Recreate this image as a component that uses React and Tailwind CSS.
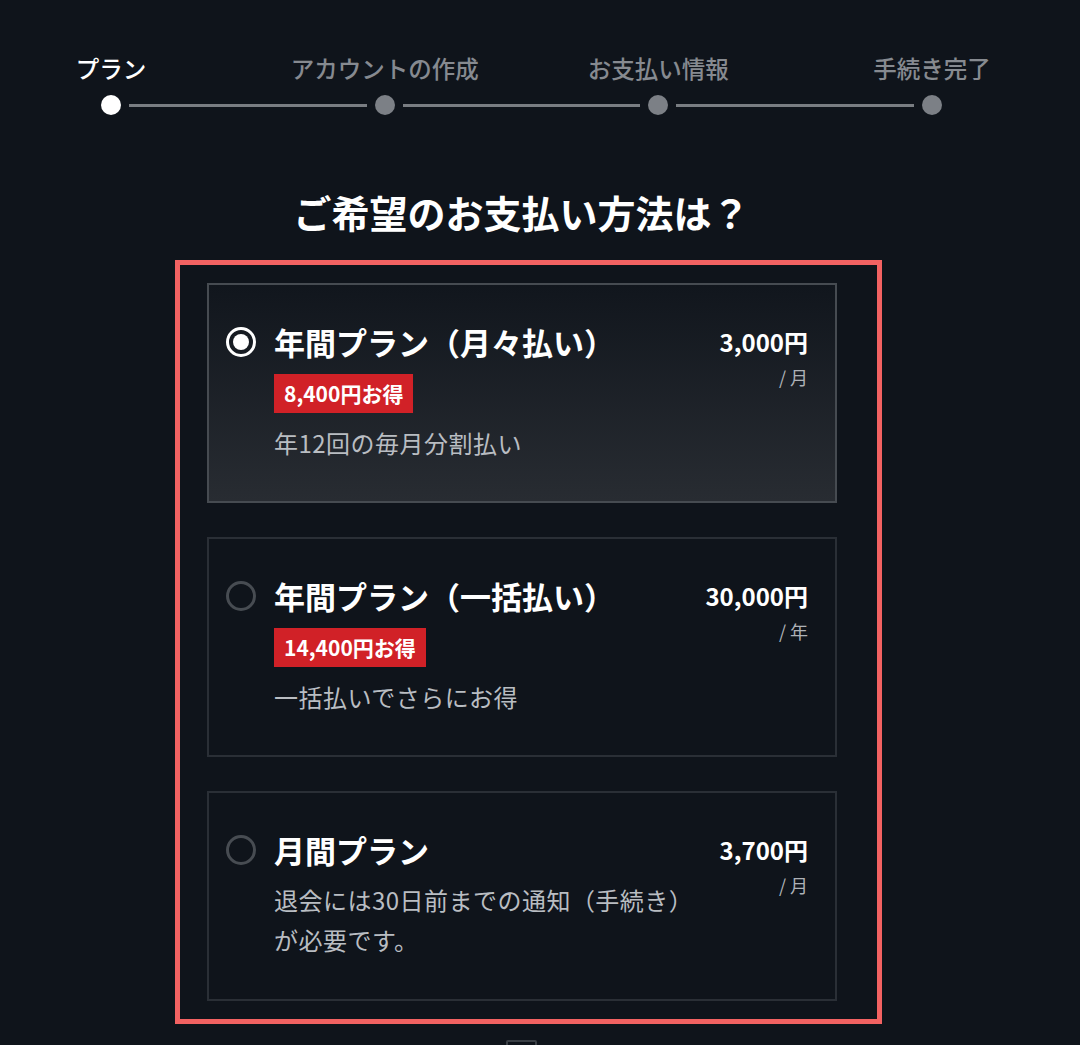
import React from 'react';

const steps = ['プラン', 'アカウントの作成', 'お支払い情報', '手続き完了'];

const plans = [
  {
    id: 'annual-monthly',
    title: '年間プラン（月々払い）',
    badge: '8,400円お得',
    desc: ['年12回の毎月分割払い'],
    price: '3,000円',
    unit: '/ 月',
    selected: true,
  },
  {
    id: 'annual-once',
    title: '年間プラン（一括払い）',
    badge: '14,400円お得',
    desc: ['一括払いでさらにお得'],
    price: '30,000円',
    unit: '/ 年',
    selected: false,
  },
  {
    id: 'monthly',
    title: '月間プラン',
    badge: null,
    desc: ['退会には30日前までの通知（手続き）', 'が必要です。'],
    price: '3,700円',
    unit: '/ 月',
    selected: false,
  },
];

function Stepper() {
  return (
    <div className="flex items-end w-[841px] mx-auto">
      {steps.map((label, i) => (
        <React.Fragment key={label}>
          {/* step: label floats centred over its dot */}
          <div className="flex flex-col items-center w-5 shrink-0">
            <span
              className={
                'whitespace-nowrap text-[23.5px] leading-8 font-medium ' +
                (i === 0 ? 'text-white' : 'text-[#868a90]')
              }
            >
              {label}
            </span>
            <div
              className={
                'mt-[11px] w-5 h-5 rounded-full ' + (i === 0 ? 'bg-white' : 'bg-[#7c8086]')
              }
            />
          </div>
          {i < steps.length - 1 && <div className="flex-1 h-[3px] mx-2 mb-[8.5px] bg-[#797d82]" />}
        </React.Fragment>
      ))}
    </div>
  );
}

function Radio({ checked }) {
  if (checked) {
    return (
      <div className="mt-[5px] w-[30px] h-[30px] shrink-0 rounded-full border-[3px] border-white flex items-center justify-center">
        <div className="w-4 h-4 rounded-full bg-white" />
      </div>
    );
  }
  return <div className="mt-[5px] w-[30px] h-[30px] shrink-0 rounded-full border-[3px] border-[#474c52]" />;
}

function PlanCard({ plan }) {
  return (
    <div
      className={
        'flex items-start border-2 pl-[17px] pr-[27px] pt-[37px] ' +
        (plan.badge ? 'pb-[38px] ' : 'pb-[39px] ') +
        (plan.selected
          ? 'border-[#464b51] bg-linear-to-b from-[#11161d] to-[#282c32]'
          : 'border-[#2a2f36] bg-[#0f141b]')
      }
    >
      <Radio checked={plan.selected} />
      <div className="flex-1 ml-[18px] flex flex-col items-start">
        <h3 className="text-[31px] leading-10 font-bold text-white">{plan.title}</h3>
        {plan.badge && (
          <div className="mt-3 h-[39px] px-[10px] flex items-center bg-[#d12127] text-white text-[21px] font-bold">
            {plan.badge}
          </div>
        )}
        <p className="mt-[10px] text-[24px] leading-10 tracking-[0.02em] text-[#b9bdc2]">
          {plan.desc.map((line, i) => (
            <React.Fragment key={i}>
              {i > 0 && <br />}
              {line}
            </React.Fragment>
          ))}
        </p>
      </div>
      <div className="flex flex-col items-end shrink-0">
        <span className="text-[24px] leading-10 font-bold text-white">{plan.price}</span>
        <span className="mt-[3px] text-[18px] leading-6 text-[#aeb2b7]">{plan.unit}</span>
      </div>
    </div>
  );
}

export default function App() {
  return (
    <div
      className="min-h-[1045px] w-full bg-[#0f141b] overflow-hidden"
      style={{ fontFamily: '"Noto Sans CJK JP", "Noto Sans", sans-serif' }}
    >
      <div className="w-[1043px] pt-[52px] flex flex-col">
        <Stepper />

        <h2 className="mt-[73px] text-center text-[38px] leading-[48px] font-bold text-white">
          ご希望のお支払い方法は？
        </h2>

        {/* highlighted plan list */}
        <div className="mt-6 ml-[175px] w-[707px] border-[5px] border-[#f26262] pl-[27px] pr-[40px] py-[18px] flex flex-col gap-[34px]">
          {plans.map((p) => (
            <PlanCard key={p.id} plan={p} />
          ))}
        </div>

        <div className="mt-4 self-center w-[31px] h-6 border-2 border-[#3a3f45] rounded-[2px]" />
      </div>
    </div>
  );
}
